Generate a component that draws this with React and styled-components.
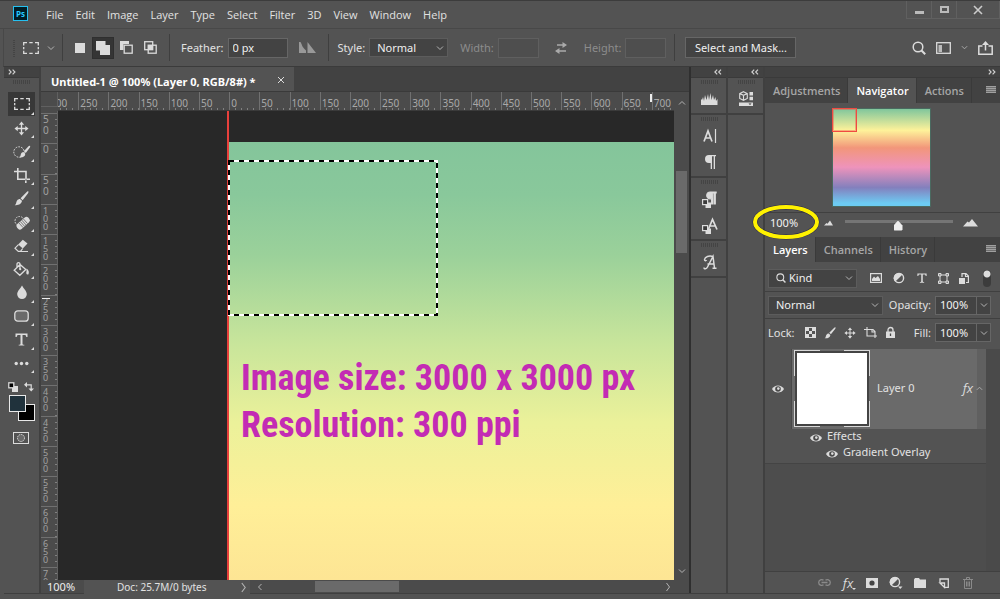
import React from "react";
import styled, { createGlobalStyle, css } from "styled-components";

const c = {
  base: "#535353",
  dark: "#424242",
  line: "#3b3b3b",
  soft: "#666666",
  text: "#e2e2e2",
  dim: "#a6a6a6",
  icon: "#dcdcdc",
};

const Global = createGlobalStyle`
  *, *::before, *::after { box-sizing: border-box; }
  body { margin: 0; background: ${c.base}; }
  button, input, select { font: inherit; color: inherit; margin: 0; padding: 0; border: 0; background: none; border-radius: 0; outline: none; }
  svg { display: block; flex: none; overflow: visible; }
`;

const Window = styled.div`
  display: flex;
  flex-direction: column;
  min-height: 100vh;
  background: ${c.base};
  border-top: 1px solid #3c3c3c;
  color: ${c.text};
  font: 11px/16px "Noto Sans", "Open Sans", sans-serif;
`;

/* ---------- icons ---------- */
const Svg = ({ w = 16, h = 16, children, ...p }) => (
  <svg width={w} height={h} viewBox={`0 0 ${w} ${h}`} fill="none" stroke={c.icon} strokeWidth="1.3" aria-hidden="true" {...p}>
    {children}
  </svg>
);
const F = { fill: c.icon, stroke: "none" };

const Chevron = ({ dir = "down", size = 8 }) => {
  const d = { down: "M1 2.5 4 5.5 7 2.5", up: "M1 5.5 4 2.5 7 5.5", left: "M5.5 1 2.5 4 5.5 7", right: "M2.5 0 5.5 4 2.5 8" }[dir];
  return <svg width={size} height={size} viewBox="0 0 8 8" fill="none" stroke="#b4b4b4" aria-hidden="true"><path d={d} /></svg>;
};
const Double = ({ dir }) => (
  <svg width="8" height="6" viewBox="0 0 8 6" fill="none" stroke="#d0d0d0" strokeWidth="1.2" aria-hidden="true">
    <path d={dir === "left" ? "M3.2 .6 .9 3 3.2 5.4M7 .6 4.7 3 7 5.4" : "M.8 .6 3.1 3 .8 5.4M4.6 .6 6.9 3 4.6 5.4"} />
  </svg>
);
const MarqueeIcon = () => <Svg w={16} h={12}><path d="M.7 3.5V.7H4M6.3 .7H9.7M12 .7h3.3v2.8M15.3 5v2.2M15.3 8.7v2.6H12M9.7 11.3H6.3M4 11.3H.7V8.7M.7 7.2V5" /></Svg>;
const MoveIcon = ({ s = 15 }) => (
  <svg width={s} height={s} viewBox="0 0 16 16" fill={c.icon} aria-hidden="true">
    <path d="M8 .5 10.8 4H8.7v3.3H12V5.2L15.5 8 12 10.8V8.7H8.7V12h2.1L8 15.5 5.2 12h2.1V8.7H4v2.1L.5 8 4 5.2v2.1h3.3V4H5.2z" />
  </svg>
);
const BrushIcon = ({ s = 15 }) => (
  <svg width={s} height={s} viewBox="0 0 16 16" fill={c.icon} aria-hidden="true">
    <path d="M15.3.6c.5.5 0 1.200-.5 2L9.200 9.800 7 7.800 13.300 1.300c.7-.7 1.500-1.200 2-.7zM6.300 8.500l2.200 2c-.2 3.300-3.500 5-7.700 4.600C2.800 14 2 12.200 3.300 10.200c.8-1.200 1.800-1.700 3-1.700z" />
  </svg>
);
const QuickSelectIcon = () => (
  <Svg w={18} h={14}>
    <circle cx="6" cy="7" r="5.200" strokeWidth="1" strokeDasharray="1.700 1.200" />
    <path {...F} d="M17 .8c.5.5 0 1.500-.5 2.200L12.800 8l-1.900-1.700L15.500 1.300c.5-.5 1.100-.9 1.500-.5zM10.300 6.900l2 1.900c0 2.800-2.500 4-5.800 3.700 1.300-.8.8-2.300 1.600-3.900.5-1 1.200-1.600 2.200-1.700z" />
  </Svg>
);
const CropIcon = () => <Svg w={16} h={15} strokeWidth="1.600"><path d="M0 3.500h12v8.300M3.800 0v11.300H11M13 11.300h3M11.800 12.500V15" /></Svg>;
const HealIcon = () => (
  <Svg w={16} h={15}>
    <circle cx="5.500" cy="6" r="4.500" strokeWidth="1" strokeDasharray="1.600 1.200" />
    <g transform="rotate(-42 9 8)"><rect x="1.500" y="5" width="15" height="6.500" rx="2.500" {...F} /><path d="M6 5v6.500M8 5v6.500M10 5v6.500M12 5v6.500" stroke="#666" strokeWidth=".8" /></g>
  </Svg>
);
const EraserIcon = () => (
  <Svg w={15} h={14}>
    <path {...F} d="M8.800.8 13.500 4.500 8.800 9.500 4.200 5.500z" /><path d="M4.500 5.600 1 9.200l3.300 3.200h2.200L8.700 9.500M4 12.500h10" strokeWidth="1.200" />
  </Svg>
);
const BucketIcon = () => (
  <Svg w={17} h={15}>
    <path d="M7 2.500 1.200 8.300l5.600 5 6-5.800zM4 5V2.200C4 .2 7 .2 7 2.200V7" strokeWidth="1.300" />
    <circle cx="7.200" cy="7.200" r="1.100" {...F} /><path {...F} d="M13.500 6.500c2.300 1.200 3 4 1.800 6-2 .5-2.300-1.300-1.800-3z" />
  </Svg>
);
const DropIcon = () => <Svg w={12} h={15}><path {...F} d="M6 .5c1.500 3 4.800 5.500 4.800 8.800A4.800 4.800 0 0 1 6 14a4.800 4.800 0 0 1-4.800-4.700C1.200 6 4.500 3.500 6 .5z" /></Svg>;
const RoundRectIcon = () => <Svg w={15} h={12}><rect x=".8" y=".8" width="13.400" height="10.400" rx="3" fill="#6a6a6a" /></Svg>;
const TypeIcon = ({ s = 13 }) => (
  <svg width={s} height={s} viewBox="0 0 13 13" fill={c.icon} aria-hidden="true"><path d="M.5.500h12V4h-1.200C11.100 2.500 10.700 1.900 9.500 1.900H7.500v8.800c0 .7.300 1 1.800 1v.9H3.700v-.9c1.500 0 1.800-.3 1.800-1V1.900h-2C2.300 1.900 1.900 2.500 1.700 4H.5z" /></svg>
);
const DotsIcon = () => <Svg w={15} h={5}><circle cx="2.200" cy="2.500" r="1.700" {...F} /><circle cx="7.500" cy="2.500" r="1.700" {...F} /><circle cx="12.800" cy="2.500" r="1.700" {...F} /></Svg>;
const EyeIcon = () => (
  <Svg w={12} h={8}><path {...F} d="M0 4C2.500-.8 9.500-.8 12 4 9.500 8.800 2.500 8.800 0 4z" /><circle cx="6" cy="4" r="2.800" fill="#4a4a4a" stroke="none" /><circle cx="6.300" cy="3.600" r="1.300" {...F} /></Svg>
);
const HalfCircle = ({ caret }) => (
  <Svg w={14} h={13}>
    <circle cx="6" cy="6" r="4.600" strokeWidth="1.400" /><path {...F} d="M2.200 9.800A5 5 0 0 1 9.500 2.400z" />
    {caret && <path {...F} d="M9 10.500h4.500L11.200 13z" />}
  </Svg>
);
const ParaIcon = ({ s = 14 }) => (
  <svg width={s} height={s} viewBox="0 0 14 14" fill={c.icon} aria-hidden="true"><path d="M6 0h7v1.200h-1V14h-1.300V1.200H9V14H7.700V8H6A4 4 0 0 1 6 0z" /></svg>
);
const Squares = () => <Svg w={9} h={9}><path {...F} d="M3.500 3.500H9V9H3.500z" /><rect x=".6" y=".6" width="5" height="5" fill="#3a3a3a" strokeWidth="1.200" /></Svg>;
const SearchIcon = ({ s = 14 }) => <svg width={s} height={s} viewBox="0 0 14 14" fill="none" stroke={c.icon} strokeWidth="1.500" aria-hidden="true"><circle cx="6" cy="6" r="4.800" /><path d="M9.500 9.500 13.200 13.200" strokeWidth="2" /></svg>;

/* ---------- menu bar ---------- */
const MenuBar = styled.header`
  display: flex;
  height: 28px;
  padding-left: 13px;
  border-bottom: 1px solid #484848;
  font: 11px/16px "Open Sans", "Noto Sans", sans-serif;
`;
const Logo = styled.span`
  display: grid;
  place-items: center;
  width: 15px;
  height: 15px;
  margin: 5px 12px 0 0;
  border: 1px solid #26c0f0;
  background: #001d26;
  color: #26c9ff;
  font: bold 8px/12px "Open Sans", sans-serif;
`;
const Menu = styled.nav`
  display: flex;
  flex: 1;
  button { padding: 0 6px; }
`;
const WindowButtons = styled.div`
  display: flex;
  height: 18px;
  border: 1px solid #606060;
  border-top: 0;
  button { display: grid; place-items: center; width: 25px; border-right: 1px solid #606060; }
  button:last-child { width: 42px; border: 0; }
`;

/* ---------- options bar ---------- */
const OptionsBar = styled.div`
  display: flex;
  align-items: center;
  height: 38px;
  padding: 0 7px 0 9px;
  margin-left: 3px;
  border-left: 1px solid #484848;
  border-bottom: 1px solid ${c.line};
`;
const Grip = styled.span`
  width: ${({ $v }) => ($v ? 2 : 18)}px;
  height: ${({ $v }) => ($v ? 18 : 4)}px;
  background: repeating-linear-gradient(${({ $v }) => ($v ? "0deg" : "90deg")}, #444 0 1px, transparent 1px 2px);
`;
const Rule = styled.span`
  width: 1px;
  height: 27px;
  background: #3f3f3f;
  margin: 0 ${({ $r = 8 }) => $r}px 0 ${({ $l = 8 }) => $l}px;
`;
const IconButton = styled.button`
  display: grid;
  place-items: center;
  width: ${({ $w = 24 }) => $w}px;
  height: ${({ $h = 22 }) => $h}px;
  ${({ $on }) => $on && css`background: #353535; box-shadow: inset 0 0 0 1px #2f2f2f;`}
`;
const OptLabel = styled.label`
  margin: 0 4px 0 ${({ $l = 0 }) => $l}px;
  color: ${({ $off }) => ($off ? "#8c8c8c" : c.text)};
`;
const Field = styled.input`
  width: ${({ $w }) => $w}px;
  height: 20px;
  padding: 0 4px;
  border: 1px solid ${({ disabled }) => (disabled ? "#5f5f5f" : c.soft)};
  background: ${({ disabled }) => (disabled ? "#4e4e4e" : "#434343")};
  color: #f0f0f0;
`;
const SelectBox = styled.span`
  display: flex;
  align-items: center;
  gap: 3px;
  width: ${({ $w }) => $w}px;
  height: 19px;
  padding: 0 3px 0 7px;
  border: 1px solid #5c5c5c;
  background: #434343;
  select { flex: 1; min-width: 0; appearance: none; color: #f0f0f0; }
`;
const Mask = styled.button`
  width: 111px;
  height: 21px;
  border: 1px solid ${c.soft};
  background: #434343;
  color: #f0f0f0;
`;
const Spacer = styled.span`flex: 1;`;
const RightTools = styled.div`display: flex; align-items: center; gap: 10px;`;

/* ---------- workspace ---------- */
const Workspace = styled.div`
  display: flex;
  flex: 1;
  margin: 0 0 5px 4px;
  border-bottom: 1px solid #3f3f3f;
`;
const Strip = styled.aside`
  display: flex;
  flex-direction: column;
  flex: none;
  width: 37px;
  border-right: 2px solid #404040;
`;
const StripHead = styled.div`
  display: flex;
  align-items: center;
  justify-content: ${({ $end }) => ($end ? "flex-end" : "flex-start")};
  height: 11px;
  padding: 0 4px;
  background: ${c.dark};
  border-bottom: 1px solid #3a3a3a;
`;
const GripRow = styled.div`display: flex; justify-content: center; padding: 2px 0;`;
const ToolList = styled.div`
  display: flex;
  flex-direction: column;
  height: 284px;
  margin-top: 5px;
  padding-left: 4px;
`;
const Tool = styled.button`
  position: relative;
  flex: 1;
  display: grid;
  place-items: center;
  width: 27px;
  ${({ $on }) => $on && css`background: #383838; background-clip: content-box; padding: 1px 0;`}
  &::after {
    content: "";
    position: absolute;
    right: 1px;
    bottom: 2px;
    border: 2px solid transparent;
    border-right-color: #ddd;
    border-bottom-color: #ddd;
    border-width: 1px 1px 2px 2px;
  }
`;
const ColorTools = styled.div`display: flex; gap: 6px; padding: 3px 0 0 4px; height: 20px;`;
const Swatches = styled.div`
  position: relative;
  width: 26px;
  height: 26px;
  margin-left: 5px;
`;
const Swatch = styled.button`
  position: absolute;
  width: 17px;
  height: 17px;
  border: 1px solid #e8e8e8;
  ${({ $back }) => ($back ? "right: 0; bottom: 0; background: #000;" : "left: 0; top: 0; background: #20323c;")}
`;
const QuickMask = styled.button`align-self: flex-start; margin: 11px 0 0 9px;`;

/* ---------- document ---------- */
const Doc = styled.main`
  display: flex;
  flex-direction: column;
  flex: 1;
  min-width: 0;
  background: ${c.dark};
  border-right: 2px solid #2f2f2f;
`;
const DocTabs = styled.div`display: flex; height: 25px; border-bottom: 1px solid #3a3a3a;`;
const DocTab = styled.div`
  display: flex;
  align-items: center;
  gap: 22px;
  width: 253px;
  padding: 5px 0 0 10px;
  background: ${c.base};
  color: #fff;
  font-weight: 700;
  white-space: nowrap;
  button { padding-bottom: 4px; }
`;
const View = styled.div`
  flex: 1;
  display: grid;
  grid-template: 19px minmax(0, 1fr) 13px / 17px minmax(0, 1fr) 15px;
  background: #4b4b4b;
`;
const Corner = styled.div`border: solid #606060; border-width: 0 1px 1px 0; margin: 0 0 4px 0;`;
const HRuler = styled.div`
  position: relative;
  overflow: hidden;
  display: flex;
  border-bottom: 1px solid #3a3a3a;
  color: #a8a8a8;
  font-size: 10px;
  line-height: 14px;
`;
const HTicks = styled.div`display: flex; flex: 1; margin: 0 -8px 0 -10px; min-width: 0;`;
const HTick = styled.span`
  flex: 1 1 0;
  min-width: 0;
  padding: 4px 0 0 1px;
  border-left: 1px solid #707070;
  background: repeating-linear-gradient(90deg, transparent 0 5px, #808080 5px 6px) left bottom / 100% 2px no-repeat;
  white-space: nowrap;
`;
const HMark = styled.i`position: absolute; right: 22px; top: 2px; width: 2px; height: 8px; background: #eee;`;
const VRuler = styled.div`
  position: relative;
  overflow: hidden;
  display: flex;
  border-right: 1px solid #606060;
  color: #a0a0a0;
  font-size: 9px;
  line-height: 8px;
`;
const VTicks = styled.div`
  display: grid;
  grid-auto-rows: minmax(0, 1fr);
  flex: 1;
  margin: 2px 0 -17px;
`;
const VTick = styled.span`
  min-height: 0;
  padding: 2px 8px 0 2px;
  border-top: 1px solid #707070;
  background: repeating-linear-gradient(180deg, transparent 0 5px, #808080 5px 6px) right top / 2px 100% no-repeat;
  word-break: break-all;
  ${({ $short }) => $short && "font-size: 10px; line-height: 11px; padding-top: 0;"}
`;
const VMark = styled.i`position: absolute; left: 1px; top: 187px; width: 8px; height: 1px; background: #eee;`;
const Canvas = styled.div`
  position: relative;
  display: flex;
  min-width: 0;
  overflow: hidden;
  padding: 31px 0 0 171px;
  background: #282828;
`;
const Guide = styled.i`position: absolute; left: 169px; top: 0; bottom: 0; width: 2px; background: #e8403c;`;
const Artwork = styled.div`
  flex: 1;
  min-width: 0;
  padding: 213px 0 0 12px;
  background: linear-gradient(#84c59b, #89c89b 12%, #9bd19a 26%, #c8e59b 46%, #ebf19a 64%, #ffef98 83%, #fde594 100%);
`;
const Selection = styled.svg`position: absolute; left: 170px; top: 49px;`;
const Caption = styled.p`
  margin: 0;
  color: #c32bb4;
  font: bold 36px/47px "Roboto Condensed", "Liberation Sans", sans-serif;
  white-space: nowrap;
`;
const VScroll = styled.div`
  display: flex;
  flex-direction: column;
  align-items: center;
  grid-row: 1 / 3;
  grid-column: 3;
  padding: 7px 2px 5px 2px;
  background: #4b4b4b;
`;
const VThumb = styled.i`width: 11px; height: 82px; margin-top: 64px; background: #6a6a6a;`;
const Status = styled.footer`
  grid-column: 1 / 4;
  display: flex;
  align-items: center;
  line-height: 14px;
`;
const Zoom = styled.input`width: 43px; height: 15px; padding-left: 6px; color: #eee;`;
const DocInfo = styled.button`
  display: flex;
  align-items: center;
  justify-content: space-between;
  width: 166px;
  height: 14px;
  padding: 1px 2px 0 33px;
  background: #535353;
  font-size: 10px;
`;
const HScroll = styled.div`display: flex; flex: 1; align-items: center; padding: 0 17px 0 6px;`;
const HThumb = styled.i`width: 84px; height: 11px; margin-left: 51px; background: #6a6a6a;`;

/* ---------- panels ---------- */
const StripGroup = styled.div`
  display: flex;
  flex-direction: column;
  align-items: center;
  padding: 0 0 1px 2px;
  border-bottom: 2px solid #404040;
  button { display: grid; place-items: center; width: 30px; height: 26px; }
`;
const Panels = styled.section`display: flex; flex-direction: column; flex: none; width: 235px;`;
const Tabs = styled.div`
  display: flex;
  height: 25px;
  background: ${c.dark};
  font: 600 11px/16px "Open Sans", "Noto Sans", sans-serif;
`;
const Tab = styled.button`
  padding: 0 7px 0 8px;
  border-right: 1px solid #3a3a3a;
  color: ${({ $on }) => ($on ? "#fff" : c.dim)};
  background: ${({ $on }) => ($on ? c.base : "transparent")};
`;
const PanelMenu = styled.button`
  width: 10px;
  height: 7px;
  margin: 8px 4px 0 auto;
  background: repeating-linear-gradient(#a0a0a0 0 1px, #707070 1px 2px);
`;
const Navigator = styled.div`display: flex; justify-content: center; padding: 5px 2px 5px 0; border-bottom: 1px solid #404040;`;
const NavThumb = styled.div`
  width: 99px;
  height: 99px;
  border: 1px solid #4a6a60;
  background: linear-gradient(#80c69c 0%, #fef29a 22%, #f2967a 40%, #ee93bb 60%, #8380bd 81%, #6dcbf3 97%);
`;
const NavFrame = styled.div`width: 25px; height: 24px; border: 1px solid #f04a42; margin: -1px 0 0 -1px; box-shadow: inset 0 0 0 1px #f04a4266;`;
const ZoomRow = styled.div`
  position: relative;
  display: flex;
  align-items: center;
  height: 24px;
  padding: 0 22px 4px 5px;
`;
const Ring = styled.svg`position: absolute; left: -13px; top: -10px; z-index: 2; pointer-events: none;`;
const ZoomValue = styled.input`width: 54px; color: #f2f2f2;`;
const Slider = styled.input`
  flex: 1;
  min-width: 0;
  height: 18px;
  margin: 0 10px 4px 12px;
  appearance: none;
  &::-webkit-slider-runnable-track { height: 3px; background: #757575; }
  &::-webkit-slider-thumb {
    appearance: none;
    width: 9px;
    height: 10px;
    margin-top: 1px;
    background: #eee;
    clip-path: polygon(50% 0, 100% 50%, 100% 90%, 90% 100%, 10% 100%, 0 90%, 0 50%);
  }
`;
const Row = styled.div`
  display: flex;
  align-items: center;
  height: ${({ $h }) => $h}px;
  padding: ${({ $t = 0 }) => $t}px 9px ${({ $b = 0 }) => $b}px 3px;
  border-bottom: ${({ $last }) => ($last ? 0 : 1)}px solid #404040;
`;
const Icons = styled.div`
  display: flex;
  align-items: center;
  justify-content: space-between;
  flex: 1;
  margin: 0 ${({ $r }) => $r}px 0 ${({ $l }) => $l}px;
`;
const Toggle = styled.button`
  width: 8px;
  height: 17px;
  border-radius: 4px;
  background: radial-gradient(circle at 4px 4px, #ddd 3px, transparent 4px) #3c3c3c;
`;
const Percent = styled.span`
  display: flex;
  width: 56px;
  height: 19px;
  border: 1px solid ${c.soft};
  background: #434343;
  input { width: 41px; padding-left: 4px; color: #f2f2f2; border-right: 1px solid ${c.soft}; }
  button { flex: 1; display: grid; place-items: center; }
`;
const LayerList = styled.div`
  flex: 1;
  padding-right: 14px;
  background: linear-gradient(#4a4a4a, #4a4a4a) right / 14px 100% no-repeat #4d4d4d;
`;
const Layer = styled.div`display: flex; height: 80px; background: ${c.base};`;
const EyeCell = styled.button`display: grid; place-items: center; width: 27px; border-right: 1px solid #484848;`;
const LayerBody = styled.div`
  display: flex;
  align-items: center;
  flex: 1;
  padding: 0 0 2px 2px;
  background: linear-gradient(#606060, #606060) right / 9px 100% no-repeat #6a6a6a;
`;
const corner = (at, w, h) => `linear-gradient(#d8d8d8, #d8d8d8) ${at} / ${w} ${h} no-repeat`;
const Thumb = styled.div`
  width: 76px;
  height: 77px;
  background:
    linear-gradient(#fff, #fff) center / 70px 71px no-repeat,
    linear-gradient(#444, #444) center / 74px 75px no-repeat,
    ${["left top", "right top", "left bottom", "right bottom"].map((at) => `${corner(at, "26px", "1px")}, ${corner(at, "1px", "26px")}`).join(",")};
`;
const Fx = styled.em`font: italic 13px/16px "Open Sans", sans-serif; color: ${c.icon};`;
const LayerName = styled.span`flex: 1; padding-left: 7px;`;
const Effects = styled.ul`
  list-style: none;
  margin: 0;
  padding: 0 0 2px 45px;
  height: 35px;
  background: ${c.base};
  border-bottom: 1px solid #444;
  li { display: flex; align-items: center; gap: 5px; height: 16px; line-height: 14px; padding-bottom: 2px; }
  li + li { padding-left: 16px; }
  button { padding-top: 3px; }
`;
const PanelFoot = styled.div`
  display: flex;
  align-items: center;
  justify-content: flex-end;
  height: 22px;
  padding-right: 20px;
  border-top: 1px solid #404040;
  button { display: grid; place-items: center; width: 24px; height: 18px; }
`;
const WithCaret = styled.button`
  position: relative;
  &::after {
    content: "";
    position: absolute;
    right: 4px;
    bottom: 2px;
    border: 2px solid transparent;
    border-top-color: #ddd;
    border-bottom: 0;
  }
`;

const menus = ["File", "Edit", "Image", "Layer", "Type", "Select", "Filter", "3D", "View", "Window", "Help"];
const tools = [
  ["Marquee", MarqueeIcon], ["Move", MoveIcon], ["Quick selection", QuickSelectIcon], ["Crop", CropIcon],
  ["Brush", BrushIcon], ["Healing brush", HealIcon], ["Eraser", EraserIcon], ["Paint bucket", BucketIcon],
  ["Blur", DropIcon], ["Rounded rectangle", RoundRectIcon], ["Type", TypeIcon], ["More tools", DotsIcon],
];
const hMarks = Array.from({ length: 21 }, (_, i) => Math.abs(i * 50 - 300));
const vMarks = Array.from({ length: 16 }, (_, i) => Math.abs(i * 50 - 50));

function Options() {
  return (
    <OptionsBar>
      <Grip $v />
      <IconButton $w={32} aria-label="Marquee tool"><MarqueeIcon /></IconButton>
      <Chevron />
      <Rule $l={7} $r={5} />
      <IconButton aria-label="New selection"><Svg w={10} h={10}><path {...F} d="M0 0h10v10H0z" /></Svg></IconButton>
      <IconButton $on $w={22} aria-label="Add to selection"><Svg w={14} h={14}><path {...F} d="M0 0h9.500v4H14v10H4V9.500H0z" /></Svg></IconButton>
      <IconButton aria-label="Subtract from selection"><Svg w={13} h={13}><path {...F} d="M0 0h9v3H3.500v6H0z" /><rect x="4.200" y="4.200" width="8" height="8" /></Svg></IconButton>
      <IconButton aria-label="Intersect with selection"><Svg w={13} h={13}><rect x=".7" y=".7" width="8" height="8" /><rect x="4.200" y="4.200" width="8" height="8" /><path {...F} d="M4 4h5v5H4z" /></Svg></IconButton>
      <Rule $l={7} $r={11} />
      <OptLabel htmlFor="feather">Feather:</OptLabel>
      <Field id="feather" $w={60} defaultValue="0 px" />
      <IconButton $w={40} aria-label="Anti-alias"><Svg w={17} h={11}><path fill="#999" stroke="none" d="M0 0h1.500l1 2 1 2.500L5 6.500l2 2V11H0zM8.500 0 17 11H8.500z" /></Svg></IconButton>
      <Rule $l={0} $r={9} />
      <OptLabel htmlFor="style">Style:</OptLabel>
      <SelectBox $w={79}><select id="style"><option>Normal</option></select><Chevron /></SelectBox>
      <OptLabel $off $l={12} htmlFor="width">Width:</OptLabel>
      <Field id="width" $w={41} disabled />
      <IconButton $w={45} aria-label="Swap width and height"><Svg w={12} h={12} stroke="#aaa"><path d="M2 3h6M4 9h7" strokeWidth="1.500" /><path fill="#aaa" stroke="none" d="M7.500 0 12 3 7.500 6zM4.500 6 0 9l4.500 3z" /></Svg></IconButton>
      <OptLabel $off htmlFor="height">Height:</OptLabel>
      <Field id="height" $w={41} disabled />
      <Rule $l={8} $r={10} />
      <Mask>Select and Mask...</Mask>
      <Spacer />
      <RightTools>
        <IconButton $w={14} aria-label="Search"><SearchIcon /></IconButton>
        <IconButton $w={15} aria-label="Workspace"><Svg w={15} h={12}><rect x=".7" y=".7" width="13.600" height="10.600" /><path {...F} fill="#bbb" d="M2.500 3H6v7H2.500z" /></Svg></IconButton>
        <Chevron size={7} />
        <IconButton $w={15} aria-label="Share"><Svg w={15} h={14} strokeWidth="1.500"><path d="M4.500 5H.8v8.200h13.400V5h-3.700M7.500 9.500V2" /><path {...F} d="M7.500 0 11 4H4z" /></Svg></IconButton>
      </RightTools>
    </OptionsBar>
  );
}

function Toolbox() {
  return (
    <Strip>
      <StripHead><Double dir="right" /></StripHead>
      <GripRow><Grip /></GripRow>
      <ToolList>
        {tools.map(([name, Icon], i) => <Tool key={name} $on={i === 0} aria-label={name}><Icon /></Tool>)}
      </ToolList>
      <ColorTools>
        <button aria-label="Default colors"><Svg w={10} h={10}><path {...F} d="M4 4h6v6H4z" /><rect x=".8" y=".8" width="5" height="5" fill="#000" /></Svg></button>
        <button aria-label="Swap colors"><Svg w={10} h={10}><path d="M2.500 2.800h4.700v4.500" strokeWidth="1.200" /><path {...F} d="M3 0v5.500L0 2.800zM4.500 6.500H10L7.200 9.500z" /></Svg></button>
      </ColorTools>
      <Swatches><Swatch $back aria-label="Background color" /><Swatch aria-label="Foreground color" /></Swatches>
      <QuickMask aria-label="Quick mask"><Svg w={16} h={12} strokeWidth="1"><rect x=".5" y=".5" width="15" height="11" /><circle cx="8" cy="6" r="3.500" strokeDasharray="1.500 .8" fill="#6a6a6a" /></Svg></QuickMask>
    </Strip>
  );
}

function Document() {
  return (
    <Doc>
      <DocTabs>
        <DocTab>
          Untitled-1 @ 100% (Layer 0, RGB/8#) *
          <button aria-label="Close"><Svg w={6} h={6} strokeWidth="1"><path d="M0 0 6 6M6 0 0 6" /></Svg></button>
        </DocTab>
      </DocTabs>
      <View>
        <Corner />
        <HRuler><HTicks>{hMarks.map((n, i) => <HTick key={i}>{n}</HTick>)}</HTicks><HMark /></HRuler>
        <VScroll><Chevron dir="up" /><VThumb /><Spacer /><Chevron /></VScroll>
        <VRuler><VTicks>{vMarks.map((n, i) => <VTick key={i} $short={n < 100}>{n}</VTick>)}</VTicks><VMark /></VRuler>
        <Canvas>
          <Artwork>
            <Caption>Image size: 3000 x 3000 px</Caption>
            <Caption>Resolution: 300 ppi</Caption>
          </Artwork>
          <Guide />
          <Selection width="210" height="156" fill="none" strokeWidth="2" aria-hidden="true">
            <rect x="1" y="1" width="208" height="154" stroke="#fff" />
            <rect x="1" y="1" width="208" height="154" stroke="#000" strokeDasharray="5 5" />
          </Selection>
        </Canvas>
        <Status>
          <Zoom aria-label="Zoom" defaultValue="100%" />
          <DocInfo>Doc: 25.7M/0 bytes <Chevron dir="right" size={9} /></DocInfo>
          <HScroll><Chevron dir="left" /><HThumb /><Spacer /><Chevron dir="right" /></HScroll>
        </Status>
      </View>
    </Doc>
  );
}

function IconStrips() {
  return (
    <>
      <Strip>
        <StripHead $end><Double dir="left" /></StripHead>
        <StripGroup><GripRow><Grip /></GripRow>
          <button aria-label="Histogram"><Svg w={17} h={12}><path {...F} d="M0 12V6l1 1 1-3 1 4 1-6 1.500 5L7 1l1 6 1.500-7 1 7L12 2l1 5 1.500-3 .5 4 1.500-2v6z" /></Svg></button>
        </StripGroup>
        <StripGroup><GripRow><Grip /></GripRow>
          <button aria-label="Character"><Svg w={14} h={14} strokeWidth="1.700"><path d="M1 12.500 5 2l4 10.500M2.500 9h5" /><path d="M12.500 0v14" strokeWidth="1.200" /></Svg></button>
          <button aria-label="Paragraph"><ParaIcon /></button>
        </StripGroup>
        <StripGroup><GripRow><Grip /></GripRow>
          <button aria-label="Paragraph styles"><Svg w={16} h={15}><g transform="translate(3 0)"><ParaIcon s={12} /></g><g transform="translate(0 7)"><Squares /></g></Svg></button>
          <button aria-label="Character styles"><Svg w={16} h={15}><path d="M6.500 11 10.500 1.500 15 11.500M8 8h5.500" strokeWidth="1.700" /><g transform="translate(0 7)"><Squares /></g></Svg></button>
        </StripGroup>
        <StripGroup><GripRow><Grip /></GripRow>
          <button aria-label="Glyphs"><Svg w={14} h={15} strokeWidth="1.500"><path d="M1 12.500c0 2 2.500 1.500 3.500-.5L10 1.500 11.500 13M10 1.500C6 .5 2 1.500 1.500 4.500c0 1.500 1.500 1.500 2 .5M4.500 9h6.500M9.500 13.300H13.500" /></Svg></button>
        </StripGroup>
      </Strip>
      <Strip>
        <StripHead $end><Double dir="left" /></StripHead>
        <StripGroup><GripRow><Grip /></GripRow>
          <button aria-label="Libraries"><Svg w={15} h={16}><path d="M4.500.7 8.300 2.500v5L4.500 9.300.7 7.500v-5zM.7 2.500 4.500 4.300 8.300 2.500M4.500 4.300v5" strokeWidth="1.100" /><path {...F} d="M10.500 1H14v3.500h-3.500zM10.500 5.800H14v3.400h-3.500zM0 11.500h14V15H0z" /><path d="M9.500 12.500h3L11 14z" fill="#333" stroke="none" /></Svg></button>
        </StripGroup>
      </Strip>
    </>
  );
}

function SidePanels() {
  return (
    <Panels>
      <StripHead $end><Double dir="right" /></StripHead>
      <Tabs><Tab>Adjustments</Tab><Tab $on>Navigator</Tab><Tab>Actions</Tab><PanelMenu aria-label="Panel menu" /></Tabs>
      <Navigator><NavThumb><NavFrame /></NavThumb></Navigator>
      <ZoomRow>
        <ZoomValue aria-label="Navigator zoom" defaultValue="100%" />
        <Svg w={9} h={6}><path {...F} d="M0 5.500 2.500 3l1 .8L6 .5l3 5z" /></Svg>
        <Slider type="range" aria-label="Zoom level" defaultValue="49" />
        <Svg w={15} h={8}><path {...F} d="M0 7.500 4.500 2.500l1.500 1L9 0l6 7.500z" /></Svg>
        <Ring width="68" height="38" fill="none" aria-hidden="true"><ellipse cx="34" cy="19" rx="31" ry="15" stroke="#24244e" strokeWidth="5" /><ellipse cx="34" cy="19" rx="31" ry="15" stroke="#fff200" strokeWidth="4" /></Ring>
      </ZoomRow>
      <Tabs><Tab $on>Layers</Tab><Tab>Channels</Tab><Tab>History</Tab><PanelMenu aria-label="Panel menu" /></Tabs>
      <Row $h={30} $t={3}>
        <SelectBox $w={89}><SearchIcon s={10} /><select aria-label="Filter kind"><option>Kind</option></select><Chevron /></SelectBox>
        <Icons $l={13} $r={14}>
          <Svg w={12} h={10}><rect x=".6" y=".6" width="10.800" height="8.800" strokeWidth="1.200" /><path {...F} d="M2 8V6l2-2.500L5.500 5 8 3l2 3v2z" /></Svg>
          <HalfCircle />
          <TypeIcon s={10} />
          <Svg w={11} h={11} strokeWidth="1"><path d="M2 2h7v7H2z" /><path d="M.5.5h2.500V3H.5zM8 .5h2.500V3H8zM.5 8h2.500v2.500H.5zM8 8h2.500v2.500H8z" fill="#888" /></Svg>
          <Svg w={10} h={11} strokeWidth="1.200"><path d="M3 4V.6h4L9.400 3v6.500H7M6.500.6V3.500h3" /><path {...F} d="M0 5h6v6H0z" /></Svg>
        </Icons>
        <Toggle aria-label="Filter on" />
      </Row>
      <Row $h={27}>
        <SelectBox $w={115}><select aria-label="Blend mode"><option>Normal</option></select><Chevron /></SelectBox>
        <Spacer />
        <OptLabel htmlFor="opacity">Opacity:</OptLabel>
        <Percent><input id="opacity" defaultValue="100%" /><button aria-label="Opacity slider"><Chevron /></button></Percent>
      </Row>
      <Row $h={30} $b={3} $last>
        <span>Lock:</span>
        <Icons $l={10} $r={19}>
          <Svg w={11} h={11} strokeWidth="1"><rect x=".5" y=".5" width="10" height="10" /><path {...F} d="M1 1h3v3H1zM7 1h3v3H7zM4 4h3v3H4zM1 7h3v3H1zM7 7h3v3H7z" /></Svg>
          <BrushIcon s={12} />
          <MoveIcon s={12} />
          <Svg w={13} h={11} strokeWidth="1.100"><path d="M0 2.500h9l2 2V11M3 0v9h10M8 2.500v2.500h3" /></Svg>
          <Svg w={9} h={11}><path {...F} d="M0 4.500h9V11H0z" /><path d="M2 5V3a2.500 2.500 0 0 1 5 0v2" /><path d="M4.500 6.500v2.500" stroke="#444" /></Svg>
        </Icons>
        <OptLabel htmlFor="fill">Fill:</OptLabel>
        <Percent><input id="fill" defaultValue="100%" /><button aria-label="Fill slider"><Chevron /></button></Percent>
      </Row>
      <LayerList>
        <Layer>
          <EyeCell aria-label="Layer visibility"><EyeIcon /></EyeCell>
          <LayerBody><Thumb /><LayerName>Layer 0</LayerName><Fx>fx</Fx><IconButton $w={13} aria-label="Collapse effects"><Chevron dir="up" size={7} /></IconButton></LayerBody>
        </Layer>
        <Effects>
          <li><button aria-label="Effects visibility"><EyeIcon /></button>Effects</li>
          <li><button aria-label="Gradient Overlay visibility"><EyeIcon /></button>Gradient Overlay</li>
        </Effects>
      </LayerList>
      <PanelFoot>
        <button aria-label="Link layers"><Svg w={13} h={7} stroke="#8a8a8a"><path d="M5.500 1.200C4-.1.700.6.700 3.500S4 6.900 5.500 5.800M7.500 1.200C9-.1 12.300.6 12.300 3.500S9 6.900 7.500 5.800M3.500 3.500h6" /></Svg></button>
        <WithCaret aria-label="Layer style"><Fx>fx</Fx></WithCaret>
        <button aria-label="Add mask"><Svg w={12} h={10}><path {...F} d="M0 0h12v10H0z" /><circle cx="6" cy="5" r="2.600" fill="#444" stroke="none" /></Svg></button>
        <button aria-label="Adjustment layer"><HalfCircle caret /></button>
        <button aria-label="New group"><Svg w={12} h={10}><path {...F} d="M0 1.500 1 0h4l1 1.500h6V10H0z" /></Svg></button>
        <button aria-label="New layer"><Svg w={10} h={10}><path d="M1 4V1h8.300v8.300H6M1 5l4.500 4.500V5z" /></Svg></button>
        <button aria-label="Delete"><Svg w={10} h={12} stroke="#8a8a8a" strokeWidth="1"><path d="M0 2.500h10M3.500 2.500v-2h3v2M1.500 2.500v9h7v-9M3.500 4.500v5M5 4.500v5M6.500 4.500v5" /></Svg></button>
      </PanelFoot>
    </Panels>
  );
}

export default function App() {
  return (
    <Window>
      <Global />
      <MenuBar>
        <Logo>Ps</Logo>
        <Menu>{menus.map((m) => <button key={m}>{m}</button>)}</Menu>
        <WindowButtons>
          <button aria-label="Minimize"><Svg w={9} h={8}><path {...F} fill="#bbb" d="M0 5h9v3H0z" /></Svg></button>
          <button aria-label="Maximize"><Svg w={9} h={7} stroke="#bbb" strokeWidth="2"><path d="M1 1h7v5H1z" /></Svg></button>
          <button aria-label="Close window"><Svg w={8} h={8} strokeWidth="1.600" stroke="#ccc"><path d="M0 0 8 8M8 0 0 8" /></Svg></button>
        </WindowButtons>
      </MenuBar>
      <Options />
      <Workspace>
        <Toolbox />
        <Document />
        <IconStrips />
        <SidePanels />
      </Workspace>
    </Window>
  );
}
